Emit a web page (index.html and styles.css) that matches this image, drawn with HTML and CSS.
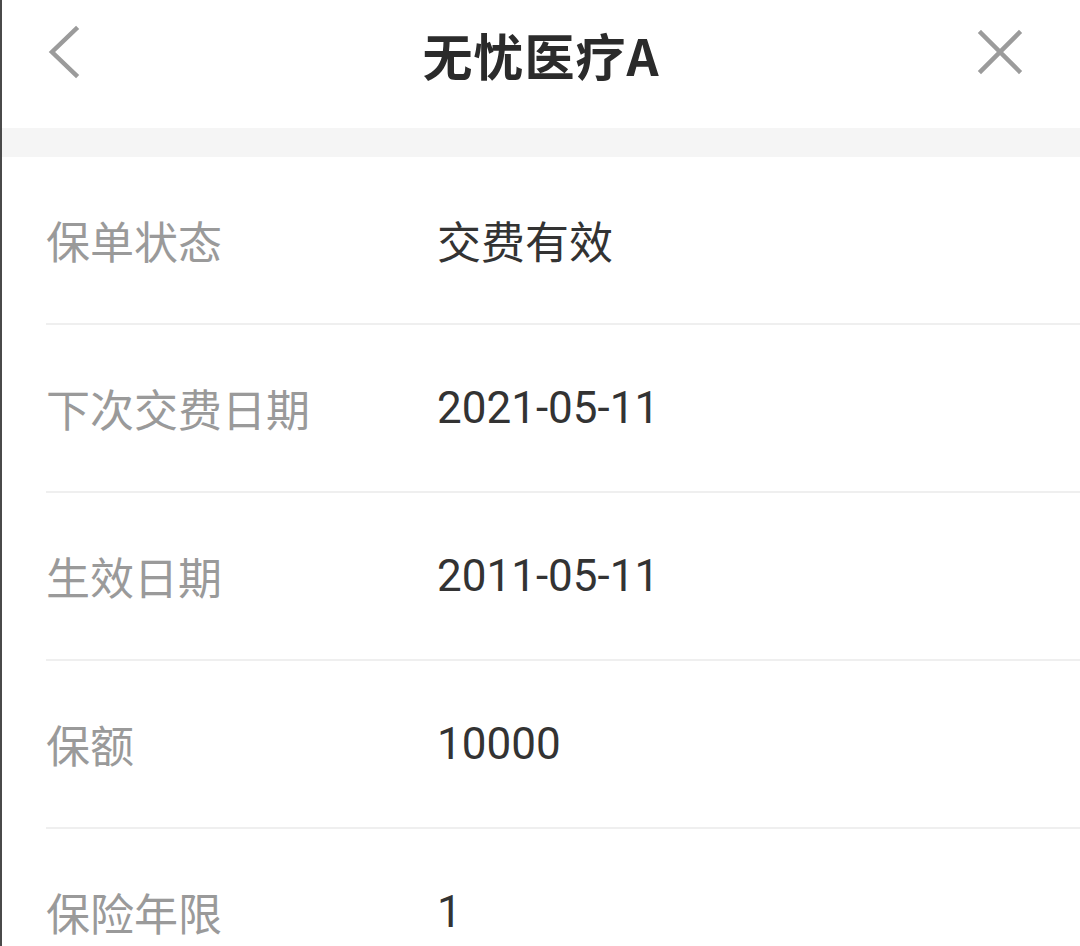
FILE: index.html
```html
<!DOCTYPE html>
<html lang="zh-CN">
<head>
<meta charset="utf-8">
<title>无忧医疗A</title>
<link rel="stylesheet" href="styles.css">
</head>
<body>
<div class="page">
  <header class="header">
    <svg class="icon back" width="40" height="60" viewBox="0 0 40 60"><polyline points="31,6 7,29 31,52" fill="none" stroke="#9b9b9b" stroke-width="4.5" stroke-linecap="square"/></svg>
    <h1 class="title">无忧医疗A</h1>
    <svg class="icon close" width="50" height="50" viewBox="0 0 50 50"><path d="M6 6 L44 44 M44 6 L6 44" fill="none" stroke="#9b9b9b" stroke-width="4.5" stroke-linecap="square"/></svg>
  </header>
  <div class="band"></div>
  <ul class="list">
    <li class="row"><span class="label">保单状态</span><span class="value">交费有效</span></li>
    <li class="row"><span class="label">下次交费日期</span><span class="value">2021-05-11</span></li>
    <li class="row"><span class="label">生效日期</span><span class="value">2011-05-11</span></li>
    <li class="row"><span class="label">保额</span><span class="value">10000</span></li>
    <li class="row"><span class="label">保险年限</span><span class="value">1</span></li>
  </ul>
</div>
</body>
</html>
```

FILE: styles.css
```css
html, body {
  margin: 0;
  padding: 0;
  background: #ffffff;
  height: 946px;
  overflow: hidden;
}
.page {
  border-left: 2px solid #4a4a4a;
  height: 946px;
  overflow: hidden;
  box-sizing: border-box;
  font-family: Roboto, "Noto Sans CJK SC", sans-serif;
}
.header {
  height: 110px;
  padding: 0 55px 18px 43px;
  display: flex;
  align-items: center;
  justify-content: space-between;
}
.icon { display: block; }
.back { margin-top: -4px; }
.close { margin-top: -6px; }
.title {
  margin: 0;
  margin-top: -2px;
  font-family: "Noto Sans CJK SC", sans-serif;
  font-weight: 700;
  font-size: 50px;
  letter-spacing: 1px;
  color: #2b2b2b;
  line-height: 1;
  margin-left: 22px;
}
.band {
  height: 29px;
  background: #f5f5f5;
}
.list {
  list-style: none;
  margin: 0;
  padding: 0 0 0 44px;
}
.row {
  height: 166px;
  border-bottom: 2px solid #efefef;
  display: flex;
  align-items: center;
}
.label {
  width: 391px;
  font-family: "Noto Sans CJK SC", sans-serif;
  font-size: 44px;
  color: #9a9a9a;
}
.value {
  font-family: Roboto, "Noto Sans CJK SC", sans-serif;
  font-size: 44px;
  color: #333333;
}
```
